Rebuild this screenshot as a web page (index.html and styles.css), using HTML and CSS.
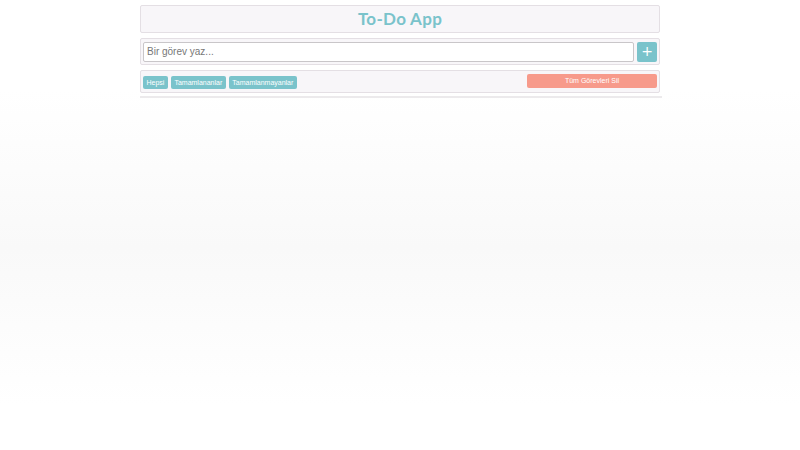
FILE: index.html
```html
<!DOCTYPE html>
<html lang="tr">
<head>
<meta charset="utf-8">
<title>To-Do App</title>
<link rel="stylesheet" href="styles.css">
</head>
<body>
<div class="app">
  <header class="panel header"><h1 class="title">To-Do App</h1></header>
  <div class="panel add-row">
    <input class="task-input" type="text" placeholder="Bir görev yaz...">
    <button class="add-btn">+</button>
  </div>
  <div class="panel filter-row">
    <div class="filters">
      <button class="btn">Hepsi</button>
      <button class="btn">Tamamlananlar</button>
      <button class="btn">Tamamlanmayanlar</button>
    </div>
    <button class="btn danger">Tüm Görevleri Sil</button>
  </div>
  <ul class="list"></ul>
</div>
</body>
</html>
```
FILE: styles.css
```css
html, body { height: 100%; }
body {
  margin: 0;
  font-family: "Liberation Sans", Arial, sans-serif;
  background: linear-gradient(to bottom, #ffffff 0%, #ffffff 20%, #f9f9f9 55%, #ffffff 90%);
}
.app {
  width: 520px;
  margin: 5px auto 0;
  display: flex;
  flex-direction: column;
  gap: 5px;
}
.panel {
  box-sizing: border-box;
  background: #f8f6f9;
  border: 1px solid #e4dfe4;
  border-radius: 2px;
}
.header {
  height: 28px;
  display: flex;
  align-items: center;
  justify-content: center;
}
.title {
  margin: 0 0 1px;
  font-family: Lato, "Open Sans", sans-serif;
  font-weight: 700;
  font-size: 17px;
  color: #7ac3cb;
  letter-spacing: 0.3px;
}
.add-row {
  height: 27px;
  display: flex;
  align-items: center;
  gap: 3px;
  padding: 0 2px;
}
.task-input {
  flex: 1;
  box-sizing: border-box;
  height: 20px;
  border: 1px solid #c9c6c9;
  border-radius: 2px;
  background: #fff;
  padding: 0 3px;
  font-family: "Liberation Sans", Arial, sans-serif;
  font-size: 10px;
  outline: none;
}
.task-input::placeholder { color: #777; }
.add-btn {
  width: 20px;
  height: 20px;
  border: none;
  border-radius: 2px;
  background: #7ac3cb;
  color: #fff;
  font-size: 14px;
  line-height: 18px;
  padding: 0 0 2px;
  font-family: "DejaVu Sans", sans-serif;
}
.filter-row {
  height: 23px;
  display: flex;
  align-items: center;
  justify-content: space-between;
  padding: 0 2px;
}
.filters { display: flex; gap: 3px; margin-top: 1px; }
.btn {
  border: none;
  border-radius: 2px;
  background: #7ac3cb;
  color: #fff;
  font-family: "Liberation Sans", Arial, sans-serif;
  font-size: 7px;
  height: 13px;
  padding: 0 3.5px;
  line-height: 13px;
}
.danger {
  background: #f79a8b;
  width: 130px;
  height: 14px;
  line-height: 14px;
  margin-bottom: 1px;
}
.list {
  margin: 0;
  padding: 0;
  list-style: none;
  width: 522px;
  height: 0;
  border-top: 2px solid #eceaec;
  margin-top: -2px;
}
```
